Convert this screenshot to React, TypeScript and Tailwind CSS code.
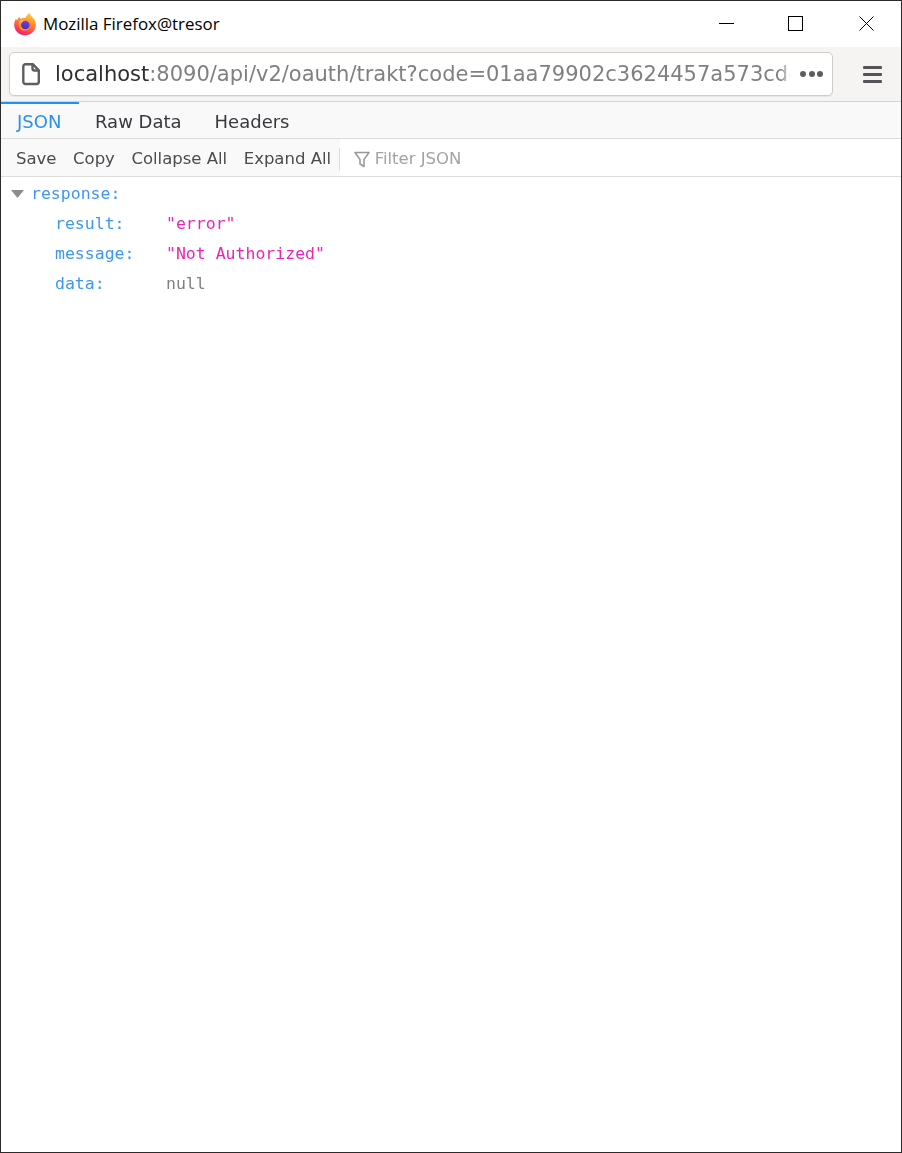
import React from "react";

function FirefoxLogo() {
    return (
        <svg width="24" height="24" viewBox="0 0 24 24" className="shrink-0">
            <defs>
                <linearGradient id="ffBody" x1="0.7" y1="0" x2="0.3" y2="1">
                    <stop offset="0" stopColor="#ffd23a" />
                    <stop offset="0.4" stopColor="#ff8a2e" />
                    <stop offset="1" stopColor="#f5156c" />
                </linearGradient>
                <linearGradient id="ffGlobe" x1="0.5" y1="0" x2="0.5" y2="1">
                    <stop offset="0" stopColor="#7a3fe0" />
                    <stop offset="1" stopColor="#4a2bb0" />
                </linearGradient>
            </defs>
            <path d="M16.5 0.800c.4 2.200 2.600 3.400 4.200 5.800 1.400 2 2.200 4.200 2.200 6.400 0 5.800-4.800 10.200-10.800 10.200S1.200 18.800 1.200 13c0-2.600.7-4.800 1.900-6.600.1 1 .5 1.700 1 2.200C4.400 6.800 5.500 5.600 7 5c-.2.900-.1 1.500.3 2 1.400-.9 3.200-1.300 5.200-1 .7-1.900 2.200-3.800 4-5.200z" fill="url(#ffBody)" />
            <path d="M5.800 10c1.700-1.900 4.700-2.700 7.300-1.600 2.700 1 4.300 3.400 3.900 6-.5 2.800-3.400 4.600-6.300 4.100-2.400-.4-4.500-2.200-4.900-4.800-.2-1.300-.2-2.600 0-3.700z" fill="#ff9a2e" />
            <circle cx="12.300" cy="13" r="4.300" fill="url(#ffGlobe)" />
            <path d="M6.500 9c2-1.500 3.700-1.600 5.700-1.100-1.600.3-2.500 1-3 2.200-1 .1-1.800.7-2.100 1.700-.5-.9-.9-1.800-.6-2.800z" fill="#ffc23a" />
        </svg>
    );
}

function PageIcon() {
    return (
        <svg width="20" height="24" viewBox="0 0 20 24" fill="none" stroke="#5e5e60" strokeWidth="2.400" className="shrink-0">
            <path d="M4.500 2.200h7.300l6 6.100v11.500a2.200 2.200 0 0 1-2.200 2.200H4.500a2.200 2.200 0 0 1-2.200-2.200V4.400a2.200 2.200 0 0 1 2.200-2.200z" strokeLinejoin="round" />
            <path d="M11.500 2.500v4a2 2 0 0 0 2 2h4" />
        </svg>
    );
}

function WindowButtons() {
    return (
        <div className="flex items-center pb-[2px] text-black">
            <svg width="15" height="15" viewBox="0 0 15 15" className="mr-[54px]">
                <path d="M0 7.500h15" stroke="#000" strokeWidth="1" />
            </svg>
            <svg width="15" height="15" viewBox="0 0 15 15" className="mr-[56px]">
                <rect x="0.500" y="0.500" width="14" height="14" fill="none" stroke="#000" strokeWidth="1" />
            </svg>
            <svg width="15" height="15" viewBox="0 0 15 15" className="mr-[27px]">
                <path d="M0.500 0.500l14 14M14.500 0.500l-14 14" stroke="#000" strokeWidth="1" />
            </svg>
        </div>
    );
}

function JsonRow({ label, value, tone }: { label: string; value: string; tone: string }) {
    return (
        <div className="flex h-[30px] items-center pl-[54px]">
            <span className="w-[111px] text-[#3d97f2] blur-[0.3px]">{label}</span>
            <span className={`${tone} blur-[0.3px]`}>{value}</span>
        </div>
    );
}

export default function App() {
    return (
        <div className="h-[1153px] w-[902px] overflow-hidden border border-[#2b2b2b] bg-white font-['DejaVu_Sans',sans-serif]">
            {/* Title bar */}
            <div className="flex h-[46px] items-center justify-between bg-white">
                <div className="flex items-center gap-[6px] pl-[12px]">
                    <FirefoxLogo />
                    <span className="font-['Open_Sans',sans-serif] text-[16.900px] text-black">Mozilla Firefox@tresor</span>
                </div>
                <WindowButtons />
            </div>

            {/* Url bar */}
            <div className="flex h-[55px] items-center border-b border-[#d6d4d2] bg-[#f5f4f3] pl-[8px]">
                <div className="flex h-[44px] w-[824px] items-center rounded-[5px] border border-[#d0cdc9] bg-white pl-[11px] pr-[9px] shadow-[0_1px_1px_rgba(0,0,0,0.06)]">
                    <PageIcon />
                    <div className="ml-[14px] min-w-0 flex-1 overflow-hidden whitespace-nowrap pt-[2px] text-[21px] text-[#808082] blur-[0.3px] [mask-image:linear-gradient(to_left,transparent,black_10px)]">
                        <span className="text-[#2f2f33]">localhost</span>:8090/api/v2/oauth/trakt?code=01aa79902c3624457a573cd4
                    </div>
                    <div className="ml-[9px] flex gap-[2.500px]">
                        <span className="h-[6px] w-[6px] rounded-full bg-[#5e5e60]" />
                        <span className="h-[6px] w-[6px] rounded-full bg-[#5e5e60]" />
                        <span className="h-[6px] w-[6px] rounded-full bg-[#5e5e60]" />
                    </div>
                </div>
                <div className="ml-[30px] flex flex-col gap-[4px]">
                    <span className="h-[3px] w-[19px] rounded-[1px] bg-[#555557]" />
                    <span className="h-[3px] w-[19px] rounded-[1px] bg-[#555557]" />
                    <span className="h-[3px] w-[19px] rounded-[1px] bg-[#555557]" />
                </div>
            </div>

            {/* Tabs */}
            <div className="flex h-[37px] items-stretch border-b border-[#dddcdb] bg-[#f9f9fa] text-[18px] text-[#38383d]">
                <div className="flex w-[78px] items-center border-t-[2px] border-[#1f8fff] pl-[16px] text-[#2b8ff0]">
                    <span className="blur-[0.3px]">JSON</span>
                </div>
                <div className="ml-[16px] flex items-center pt-[2px] blur-[0.3px]">Raw Data</div>
                <div className="ml-[33px] flex items-center pt-[2px] blur-[0.3px]">Headers</div>
            </div>

            {/* Toolbar */}
            <div className="flex h-[38px] items-center border-b border-[#dddcdb] text-[16.500px] text-[#4a4a4f]">
                <div className="flex h-full items-center gap-[16.500px] bg-[#f9f9fa] pl-[15px] pt-[3px]">
                    <span className="blur-[0.3px]">Save</span>
                    <span className="blur-[0.3px]">Copy</span>
                    <span className="blur-[0.3px]">Collapse All</span>
                    <span className="blur-[0.3px]">Expand All</span>
                    <span className="ml-[-9px] h-[22px] w-px bg-[#dddcdb]" />
                </div>
                <div className="flex items-center gap-[5px] pl-[14px] pt-[3px] text-[#a3a3a6]">
                    <svg width="16" height="17" viewBox="0 0 16 17" fill="none" stroke="#98989b" strokeWidth="1.500" strokeLinejoin="round">
                        <path d="M1 1.500h14L10 8.500v7l-4-2.500v-4.500z" />
                    </svg>
                    <span className="blur-[0.3px]">Filter JSON</span>
                </div>
            </div>

            {/* Json tree */}
            <div className="pt-[2px] font-['DejaVu_Sans_Mono',monospace] text-[16.500px]">
                <div className="flex h-[30px] items-center pl-[10px]">
                    <svg width="13" height="8" viewBox="0 0 13 8" className="mr-[7px]">
                        <path d="M0 0h13L6.500 8z" fill="#8c8c8f" />
                    </svg>
                    <span className="text-[#3d97f2] blur-[0.3px]">response:</span>
                </div>
                <JsonRow label="result:" value={'"error"'} tone="text-[#ed22b8]" />
                <JsonRow label="message:" value={'"Not Authorized"'} tone="text-[#ed22b8]" />
                <JsonRow label="data:" value="null" tone="text-[#808083]" />
            </div>
        </div>
    );
}
